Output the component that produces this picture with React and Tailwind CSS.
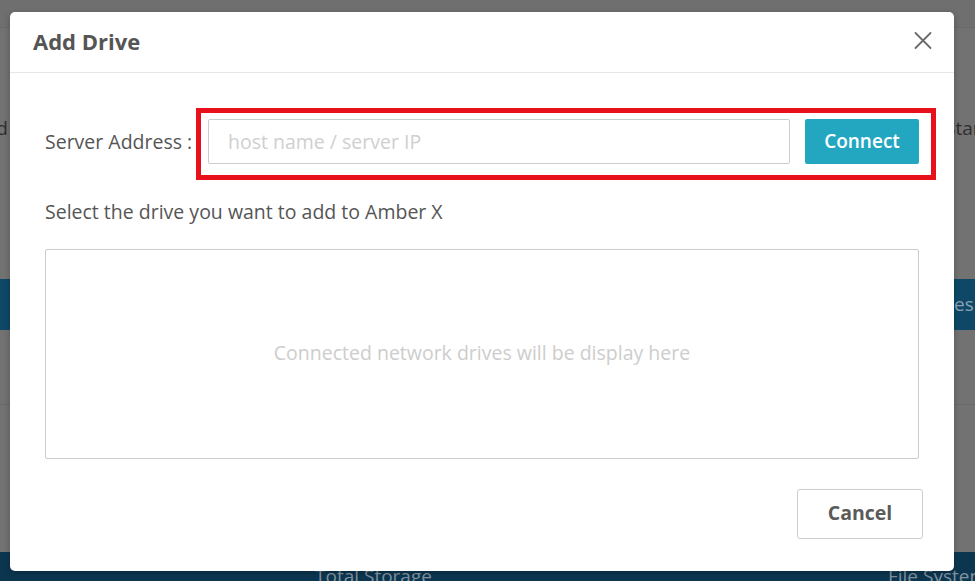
import React, { useState } from "react";

const CloseIcon = () => (
  <svg width="18" height="17" viewBox="0 0 18 17" fill="none">
    <path d="M1.5 1L16.5 16M16.5 1L1.5 16" stroke="#6b6b6b" strokeWidth="1.8" strokeLinecap="round" />
  </svg>
);

// the dimmed page behind the dialog
const Backdrop = () => (
  <div className="flex flex-col h-full bg-[#727272] text-[#2e2e2e]">
    <div className="h-[28px] bg-[#6f6f6f] border-b border-[#6a6a6a]" />
    <div className="h-[251px] flex justify-between items-start pt-[86px]">
      <div className="w-[8px] overflow-hidden flex justify-end text-[19px] whitespace-nowrap">Used</div>
      <div className="w-[21px] overflow-hidden text-[19px] whitespace-nowrap">
        <span className="ml-[-9px]">Start</span>
      </div>
    </div>
    <div className="h-[51px] bg-[#0e4866] flex justify-end items-center text-[#8aa3b3] text-[19px]">
      <div className="w-[21px] overflow-hidden whitespace-nowrap">es</div>
    </div>
    <div className="h-[75px] border-b border-[#6a6a6a]" />
    <div className="flex-1" />
    <div className="h-[29px] bg-[#0c3650] flex text-[#8192a0] text-[19px] leading-none pt-[15px] overflow-hidden">
      <span className="ml-[315px]">Total Storage</span>
      <span className="ml-auto mr-[-12px]">File System</span>
    </div>
  </div>
);

export default function App() {
  const [server, setServer] = useState("");
  return (
    <div
      className="relative w-[975px] h-[581px] overflow-hidden"
      style={{ fontFamily: '"Open Sans", "Noto Sans", sans-serif' }}
    >
      <Backdrop />
      <div className="absolute left-[10px] top-[12px] w-[944px] h-[559px] bg-white rounded-[5px] shadow-[0_2px_6px_rgba(0,0,0,0.25)] flex flex-col">
        <div className="h-[61px] flex items-center justify-between pl-[23px] pr-[22px] border-b border-[#e6e6e6]">
          <h2 className="text-[22px] font-bold text-[#555555] pb-[1px]">Add Drive</h2>
          <button className="pb-[3px]">
            <CloseIcon />
          </button>
        </div>
        <div className="flex flex-col flex-1 pl-[35px] pr-[31px] pt-[35px]">
          <div className="flex items-center">
            <label className="w-[151px] text-[19.5px] leading-[26px] text-[#555555] whitespace-nowrap pb-[4px]">
              Server Address :
            </label>
            <div className="flex items-start gap-[15px] border-[5px] border-[#e8101a] pl-[7px] pr-[12px] pt-[6px] pb-[11px] mr-[-13px]">
              <input
                value={server}
                onChange={(e) => setServer(e.target.value)}
                placeholder="host name / server IP"
                className="w-[582px] h-[45px] border border-[#cccccc] rounded-[2px] px-[19px] text-[19.5px] text-[#555] placeholder:text-[#cfcfcf] outline-none"
              />
              <button className="w-[114px] h-[45px] bg-[#23a7c1] rounded-[2px] text-white text-[19px] font-semibold">
                Connect
              </button>
            </div>
          </div>
          <p className="mt-[19px] text-[19.5px] leading-[26px] text-[#555555]">
            Select the drive you want to add to Amber X
          </p>
          <div className="mt-[24px] mr-[4px] h-[210px] border border-[#cccccc] rounded-[2px] flex items-center justify-center">
            <span className="text-[19.5px] text-[#cdcdcd] pb-[2px]">
              Connected network drives will be display here
            </span>
          </div>
          <div className="flex justify-end mt-[30px]">
            <button className="w-[126px] h-[50px] border border-[#cccccc] rounded-[3px] text-[19.5px] font-bold text-[#5a5a5a] pb-[2px]">
              Cancel
            </button>
          </div>
        </div>
      </div>
    </div>
  );
}
